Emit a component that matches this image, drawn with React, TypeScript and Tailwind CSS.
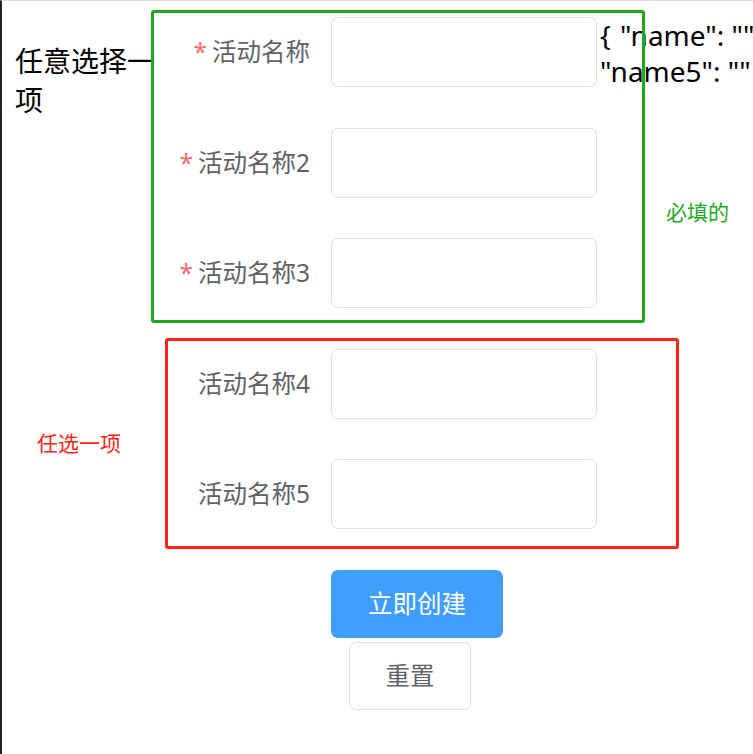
import React from "react";

const font = { fontFamily: '"Noto Sans", "Noto Sans CJK SC", sans-serif' };

function Row({ label, required, className }: { label: string; required?: boolean; className?: string }) {
  return (
    <div className={"flex items-center h-[70px] " + (className ?? "")}>
      <div className="w-[176px] pr-[21px] text-right text-[24.5px] leading-[70px] text-[#606266] whitespace-nowrap">
        {required && <span className="text-[#f56c6c] mr-[5px]">*</span>}
        {label}
      </div>
      <div className="w-[266px] h-[70px] border border-[#dcdfe6] rounded-[7px] bg-white" />
    </div>
  );
}

export default function App() {
  return (
    <div
      className="relative h-[754px] w-[753px] overflow-hidden border-t border-l-2 border-t-[#dcdcdc] border-l-[#222222] bg-white"
      style={font}
    >
      <div className="flex items-start">
        <div className="ml-[13px] mt-[41px] w-[140px] shrink-0 text-[28px] leading-[39px] text-black">
          任意选择一项
        </div>
        <div className="w-[442px] shrink-0 pt-[16px] flex flex-col">
          <Row label="活动名称" required />
          <Row label="活动名称2" required className="mt-[41px]" />
          <Row label="活动名称3" required className="mt-[40px]" />
          <Row label="活动名称4" className="mt-[41px]" />
          <Row label="活动名称5" className="mt-[40px]" />
          <div className="ml-[176px] mt-[41px] w-[266px] flex flex-col items-start">
            <button className="w-[172px] h-[68px] rounded-[7px] bg-[#409eff] text-white text-[24.5px]">
              立即创建
            </button>
            <button className="ml-[18px] mt-[4px] w-[122px] h-[68px] rounded-[7px] border border-[#dcdfe6] bg-white text-[#606266] text-[24.5px]">
              重置
            </button>
          </div>
        </div>
        <div className="ml-[3px] pt-[16px] shrink-0 text-[28px] leading-[36px] text-black whitespace-pre">
          <div>
            <span className="inline-block w-[20px]">{"{"}</span>
            {'"name": "", "name2": "", "name3": "", "name4": "",'}
          </div>
          <div>{'"name5": "" }'}</div>
        </div>
      </div>

      <div className="absolute left-[149px] top-[9px] w-[494px] h-[313px] border-[3px] border-[#1fa91f] rounded-[3px]" />
      <div className="absolute left-[163px] top-[337px] w-[514px] h-[211px] border-[3px] border-[#ff2216] rounded-[3px]" />
      <div className="absolute left-[664px] top-[201px] text-[21px] leading-[21px] text-[#1fa91f]">必填的</div>
      <div className="absolute left-[35px] top-[432px] text-[21px] leading-[21px] text-[#ff2216]">任选一项</div>
    </div>
  );
}
